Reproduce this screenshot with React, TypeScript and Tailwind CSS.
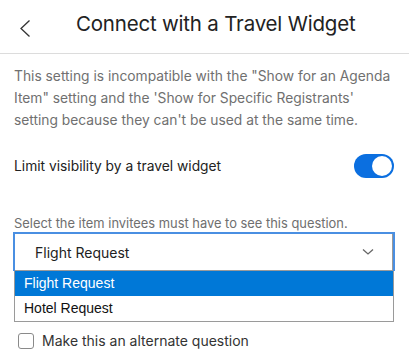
import React from "react";

export default function App() {
  const font = { fontFamily: "Inter, 'Noto Sans', sans-serif" };
  return (
    <div className="w-[409px] h-[361px] bg-white overflow-hidden text-[#1f1f1f]" style={font}>
      <div className="h-[54px] border-b border-[#dcdcdc] flex items-center">
        <div className="w-[76px] pl-[19px] flex items-center pt-[3px]">
          <svg width="12" height="17" viewBox="0 0 12 17" fill="none">
            <path d="M10.5 0.5 L2 8.5 L10.5 16.5" stroke="#333" strokeWidth="1.3" />
          </svg>
        </div>
        <div className="text-[20.5px] tracking-[-0.2px] text-[#222] pb-[4px]">Connect with a Travel Widget</div>
      </div>
      <div className="px-[14px]">
        <p className="mt-[11px] text-[13.8px] leading-[22px] text-[#707070]">
          This setting is incompatible with the "Show for an Agenda Item" setting and the 'Show for Specific Registrants' setting because they can't be used at the same time.
        </p>
        <div className="mt-[23px] flex items-center justify-between">
          <span className="text-[13.8px] text-[#222]">Limit visibility by a travel widget</span>
          <div className="mr-[1px] w-[40px] h-[24px] rounded-full bg-[#0b6fe0] flex items-center justify-end pr-[2px]">
            <div className="w-[20px] h-[20px] rounded-full bg-white" />
          </div>
        </div>
        <div className="mt-[36px] text-[12.9px] text-[#6f6f6f]">Select the item invitees must have to see this question.</div>
        <div className="-mt-px w-[382px] -ml-px border-2 border-[#4a8fe2] border-b-0">
          <div className="h-[37px] border-r border-b border-[#9a9a9a] flex items-center justify-between pl-[20px] pr-[18px]">
            <span className="text-[14px] text-[#222]">Flight Request</span>
            <svg width="12" height="8" viewBox="0 0 12 8" fill="none">
              <path d="M1 1.5 L6 6 L11 1.5" stroke="#666" strokeWidth="1.3" />
            </svg>
          </div>
        </div>
        <div className="w-[380px] border border-[#9a9a9a] border-t-0" style={{ fontFamily: "'Liberation Sans', Arial, sans-serif" }}>
          <div className="h-[25px] bg-[#0078d7] text-white text-[14px] flex items-center pl-[9px]">Flight Request</div>
          <div className="h-[25px] text-[#111] text-[14px] flex items-center pl-[9px]">Hotel Request</div>
        </div>
        <div className="mt-[8px] flex items-center">
          <div className="ml-[4px] w-[16px] h-[16px] rounded-[3px] border border-[#8a8a8a]" />
          <span className="ml-[8px] text-[14px] text-[#333]">Make this an alternate question</span>
        </div>
      </div>
    </div>
  );
}
